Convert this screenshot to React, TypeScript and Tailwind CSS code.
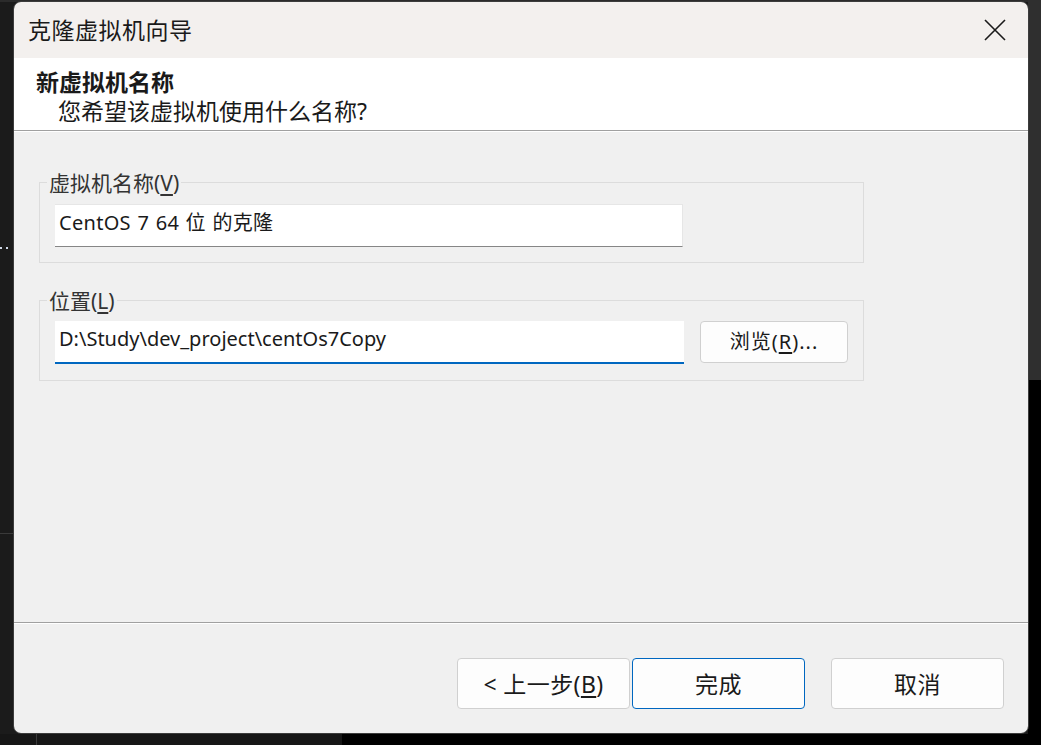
import React from 'react';

const font = { fontFamily: '"Noto Sans", "Noto Sans CJK SC", sans-serif' };

function Btn({ children, primary = false }: { children: React.ReactNode; primary?: boolean }) {
  return (
    <button
      className={`flex h-[51px] w-[173px] items-center justify-center rounded-[4px] bg-[#fdfdfd] text-[23px] leading-[28px] tracking-[0.4px] text-[#1a1a1a] ${
        primary ? 'border border-[#0067c0]' : 'border border-[#d0d0d0]'
      }`}
    >
      {children}
    </button>
  );
}

function Group({ label, children }: { label: React.ReactNode; children: React.ReactNode }) {
  return (
    <div className="relative h-[81px] w-[825px] border border-[#dcdcdc]">
      {/* legend sits over the top border */}
      <span className="absolute -top-[12px] left-[7px] bg-[#f0f0f0] px-[2px] text-[21px] leading-[25px] text-[#333]">
        {label}
      </span>
      {children}
    </div>
  );
}

export default function App() {
  return (
    <div className="relative h-[745px] w-[1041px] overflow-hidden bg-[#1b1b1b] pl-[13px] pt-[1px]" style={font}>
      {/* desktop behind the dialog */}
      <div className="absolute left-0 top-0 h-[2px] w-full bg-[#2b2b2b]" />
      <div className="absolute right-0 top-0 h-[380px] w-[13px] bg-[#2f2f2f]" />
      <div className="absolute bottom-0 right-0 h-[365px] w-[13px] bg-black" />
      <div className="absolute bottom-0 left-0 h-[11px] w-[342px] bg-[#161616]" />
      <div className="absolute bottom-0 left-[342px] h-[11px] w-[700px] bg-black" />
      <div className="absolute bottom-0 left-[36px] h-[11px] w-px bg-[#3a3a3a]" />
      <div className="absolute left-0 top-[533px] h-px w-[13px] bg-[#3a3a3a]" />
      <div className="absolute left-0 top-[247px] flex gap-[4px]">
        <span className="h-[2px] w-[2px] bg-[#cfd8e6]" />
        <span className="h-[2px] w-[2px] bg-[#cfd8e6]" />
      </div>

      <div className="relative z-10 flex h-[733px] w-[1016px] flex-col overflow-hidden rounded-[8px] border border-[#3c3c3c] text-[#1a1a1a]">
        {/* title bar */}
        <div className="flex h-[56px] shrink-0 items-center justify-between bg-[#f3f0ee] pl-[14px] pr-[22px]">
          <span className="text-[23px] leading-[30px] tracking-[0.5px]">克隆虚拟机向导</span>
          <svg width="22" height="22" viewBox="0 0 22 22" fill="none" stroke="#1a1a1a" strokeWidth="1.6">
            <path d="M1 1 L21 21 M21 1 L1 21" />
          </svg>
        </div>

        {/* header */}
        <div className="flex h-[72px] shrink-0 flex-col bg-white pl-[22px] pt-[10px]">
          <span className="text-[23px] font-bold leading-[29px]">新虚拟机名称</span>
          <span className="pl-[22px] text-[23px] leading-[29px]">您希望该虚拟机使用什么名称?</span>
        </div>
        <div className="h-px shrink-0 bg-[#a0a0a0]" />
        <div className="h-px shrink-0 bg-white" />

        {/* body */}
        <div className="flex h-[490px] shrink-0 flex-col bg-[#f0f0f0] pl-[25px] pt-[50px]">
          <Group
            label={
              <>
                虚拟机名称(<span className="underline underline-offset-[3px]">V</span>)
              </>
            }
          >
            <div className="pl-[15px] pt-[21px]">
              <div className="flex h-[43px] w-[628px] items-center border-b border-r border-t border-[#e6e6e6] border-b-[#868686] bg-white pb-[6px] pl-[4px] text-[20px] tracking-[0.3px] [word-spacing:1px]">
                CentOS 7 64 位 的克隆
              </div>
            </div>
          </Group>

          <div className="h-[37px]" />

          <Group
            label={
              <>
                位置(<span className="underline underline-offset-[3px]">L</span>)
              </>
            }
          >
            <div className="flex items-start pl-[15px] pt-[20px]">
              <div className="flex h-[43px] w-[629px] items-center border-b-2 border-[#0067c0] bg-white pb-[5px] pl-[4px] text-[20px]">
                D:\Study\dev_project\centOs7Copy
              </div>
              <button className="ml-[16px] flex h-[42px] w-[148px] items-center justify-center rounded-[4px] border border-[#d0d0d0] bg-[#fdfdfd] text-[20px] tracking-[1px]">
                浏览(<span className="underline underline-offset-[3px]">R</span>)...
              </button>
            </div>
          </Group>
        </div>

        <div className="h-px shrink-0 bg-[#a0a0a0]" />
        <div className="h-px shrink-0 bg-white" />

        {/* footer */}
        <div className="flex flex-1 items-start justify-end bg-[#f0f0f0] pr-[24px] pt-[34px]">
          <Btn>
            &lt; 上一步(<span className="underline underline-offset-[3px]">B</span>)
          </Btn>
          <div className="w-[2px]" />
          <Btn primary>完成</Btn>
          <div className="w-[26px]" />
          <Btn>取消</Btn>
        </div>
      </div>
    </div>
  );
}
